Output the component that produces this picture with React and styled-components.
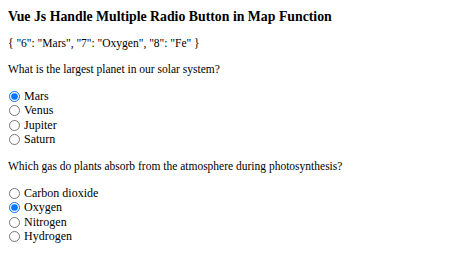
import { useState } from "react";
import styled, { createGlobalStyle } from "styled-components";

const GlobalStyle = createGlobalStyle`
  body {
    margin: 0;
    background: #ffffff;
    color: #000000;
    font-family: "Liberation Serif", "Times New Roman", serif;
  }
`;

const Page = styled.div`
  padding: 9px 8px 8px;
`;

const Title = styled.h3`
  margin: 0 0 12px;
  font-size: 13.8px;
  line-height: 16px;
  font-weight: bold;
`;

const Json = styled.p`
  margin: 0 0 13px;
  font-size: 11.5px;
  line-height: 13px;
`;

const Question = styled.p`
  margin: 0 0 13px;
  font-size: 11.5px;
  line-height: 13px;
`;

const Options = styled.div`
  display: flex;
  flex-direction: column;
  margin-bottom: 13px;
`;

const OptionRow = styled.label`
  display: flex;
  align-items: center;
  height: 14.5px;
  font-size: 12px;
`;

const Radio = styled.input`
  width: 11px;
  height: 11px;
  margin: 0 4px 0 1px;
  accent-color: #0075ff;
`;

const QUESTIONS = [
  {
    id: 6,
    text: "What is the largest planet in our solar system?",
    options: ["Mars", "Venus", "Jupiter", "Saturn"],
  },
  {
    id: 7,
    text: "Which gas do plants absorb from the atmosphere during photosynthesis?",
    options: ["Carbon dioxide", "Oxygen", "Nitrogen", "Hydrogen"],
  },
];

const formatAnswers = (answers) =>
  "{ " +
  Object.entries(answers)
    .map(([key, value]) => `"${key}": "${value}"`)
    .join(", ") +
  " }";

const App = () => {
  const [answers, setAnswers] = useState({ 6: "Mars", 7: "Oxygen", 8: "Fe" });

  const choose = (id, value) => setAnswers({ ...answers, [id]: value });

  return (
    <Page>
      <GlobalStyle />
      <Title>Vue Js Handle Multiple Radio Button in Map Function</Title>
      <Json>{formatAnswers(answers)}</Json>
      {QUESTIONS.map((q) => (
        <div key={q.id}>
          <Question>{q.text}</Question>
          <Options>
            {q.options.map((option) => (
              <OptionRow key={option}>
                <Radio
                  type="radio"
                  name={`question-${q.id}`}
                  value={option}
                  checked={answers[q.id] === option}
                  onChange={() => choose(q.id, option)}
                />
                {option}
              </OptionRow>
            ))}
          </Options>
        </div>
      ))}
    </Page>
  );
};

export default App;
